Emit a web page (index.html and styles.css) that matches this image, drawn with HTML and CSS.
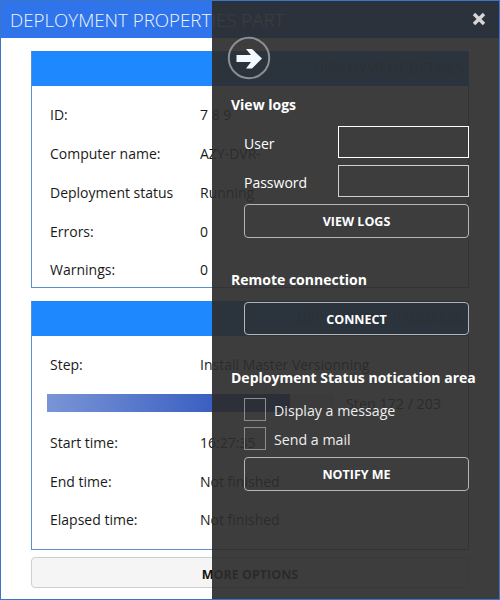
FILE: index.html
```html
<!DOCTYPE html>
<html lang="en">
<head>
<meta charset="utf-8">
<title>Deployment properties part</title>
<link rel="stylesheet" href="styles.css">
</head>
<body>
<div class="window">
  <header class="titlebar">DEPLOYMENT PROPERTIES PART</header>
  <main class="content">
    <section class="card card-details">
      <h2 class="card-head">DEPLOYMENT DETAILS</h2>
      <div class="card-body">
        <div class="row"><span class="label">ID:</span><span>7 8 9</span></div>
        <div class="row"><span class="label">Computer name:</span><span>AZY-DVR-</span></div>
        <div class="row"><span class="label">Deployment status</span><span>Running</span></div>
        <div class="row"><span class="label">Errors:</span><span>0</span></div>
        <div class="row"><span class="label">Warnings:</span><span>0</span></div>
      </div>
    </section>
    <section class="card card-progress">
      <h2 class="card-head">DEPLOYMENT PROGRESS</h2>
      <div class="card-body">
        <div class="row"><span class="label">Step:</span><span>Install Master Versionning</span></div>
        <div class="progress-line">
          <div class="track"><div class="fill" style="width:84.6%"></div></div>
          <span class="step-count">Step 172 / 203</span>
        </div>
        <div class="row"><span class="label">Start time:</span><span>16:27:35</span></div>
        <div class="row"><span class="label">End time:</span><span>Not finished</span></div>
        <div class="row"><span class="label">Elapsed time:</span><span>Not finished</span></div>
      </div>
    </section>
    <button class="more" type="button">MORE OPTIONS</button>
  </main>
  <aside class="panel">
    <div class="close">
      <svg width="14" height="14" viewBox="0 0 14 14" aria-hidden="true"><path d="M2 2 L12 12 M12 2 L2 12" stroke="#d6d6d6" stroke-width="3.4" fill="none"/></svg>
    </div>
    <div class="back">
      <svg width="44" height="44" viewBox="0 0 44 44" aria-hidden="true">
        <circle cx="22" cy="22" r="20.2" fill="none" stroke="#8b8f93" stroke-width="2"/>
        <path d="M9.5 19 H24 L19 13 H25 L35 22.5 L25 32.5 H19 L24 26 H9.5 Z" fill="#f4f8ff"/>
      </svg>
    </div>
    <h3 class="group-title title-logs">View logs</h3>
    <div class="indent">
      <div class="field field-user"><label>User</label><div class="input input-active"></div></div>
      <div class="field field-pass"><label>Password</label><div class="input"></div></div>
      <button class="action" type="button">VIEW LOGS</button>
    </div>
    <h3 class="group-title title-remote">Remote connection</h3>
    <div class="indent">
      <button class="action action-connect" type="button">CONNECT</button>
    </div>
    <h3 class="group-title title-notify">Deployment Status notication area</h3>
    <div class="indent">
      <div class="check check-first"><span class="box"></span><span class="check-label">Display a message</span></div>
      <div class="check check-second"><span class="box"></span><span class="check-label">Send a mail</span></div>
      <button class="action action-notify" type="button">NOTIFY ME</button>
    </div>
  </aside>
</div>
</body>
</html>
```

FILE: styles.css
```css
* { box-sizing: border-box; }
html, body { margin: 0; padding: 0; }
body {
  font-family: "Open Sans", "Noto Sans", "Liberation Sans", sans-serif;
  font-size: 14px;
  color: #1a1a1a;
}
.window {
  position: relative;
  width: 500px;
  height: 600px;
  border: 1px solid #3c74c9;
  background: #fff;
  overflow: hidden;
}
.titlebar {
  height: 37px;
  background: #2f74ea;
  color: #f2f6ff;
  font-size: 18.7px;
  font-weight: 300;
  line-height: 38px;
  padding-left: 9px;
}
.content {
  display: flex;
  flex-direction: column;
  padding: 13px 30px 0;
}
.card {
  border: 1px solid #5d8fd0;
  border-top-color: #2f7fe8;
}
.card-details { height: 237px; }
.card-progress { height: 249px; margin-top: 13px; }
.card-head {
  margin: 0;
  height: 34px;
  background: #1e88ff;
  color: #2a5a8c;
  font-size: 14.1px;
  font-weight: 400;
  line-height: 32px;
  text-align: right;
  padding-right: 5px;
}
.card-body { padding: 9.4px 0 0 18px; }
.row {
  display: flex;
  height: 38.8px;
  align-items: center;
}
.label { width: 150px; }
.progress-line {
  display: flex;
  align-items: center;
  height: 18px;
  margin: 10px 0 10.7px -3px;
}
.track { width: 287px; height: 18px; background: #dcdcdc; }
.fill { height: 100%; background: linear-gradient(to right, #7a95d6, #1c46b8); }
.step-count { margin-left: 12px; font-size: 14.3px; }
.more {
  margin-top: 7px;
  height: 31px;
  padding: 3px 0 0;
  border: 1px solid #cfcfcf;
  border-radius: 4px;
  background: #f5f5f5;
  font: 700 12.5px "Open Sans", "Noto Sans", sans-serif;
  color: #111;
}
.panel {
  position: absolute;
  top: 0;
  right: 0;
  bottom: 0;
  width: 287px;
  background: rgba(45, 45, 45, 0.92);
  color: #fff;
  padding: 0 30px 0 19px;
}
.close { position: absolute; top: 11px; right: 13px; line-height: 0; }
.back { margin: 35px 0 0 -4.5px; height: 44px; line-height: 0; }
.group-title {
  margin: 0;
  font-size: 14px;
  font-weight: 700;
  line-height: 20px;
  white-space: nowrap;
}
.title-logs { margin-top: 15px; }
.title-remote { margin-top: 32px; }
.title-notify { margin-top: 33px; }
.indent { padding-left: 13px; }
.field { display: flex; justify-content: space-between; align-items: center; }
.field label { position: relative; top: 1px; }
.field-user { margin-top: 11px; height: 32px; }
.field-pass { margin-top: 7px; height: 32px; }
.input { width: 131px; height: 32px; border: 1px solid #cfcfcf; }
.input-active { border-color: #fff; }
.action {
  display: block;
  width: 225px;
  height: 34px;
  margin-top: 7px;
  background: transparent;
  border: 1px solid #b5b5b5;
  border-radius: 4px;
  color: #fff;
  font: 700 12.5px "Open Sans", "Noto Sans", sans-serif;
  padding: 0;
}
.action-connect { margin-top: 12px; height: 33px; padding-top: 1px; }
.check { display: flex; align-items: center; gap: 8px; height: 23px; color: #eee; }
.check-first { margin-top: 10px; }
.check-second { margin-top: 6px; }
.check-label { padding-top: 2px; font-size: 14.2px; }
.box { width: 22px; height: 23px; border: 1px solid #8c8c8c; }
.action-notify { margin-top: 7px; }
```
